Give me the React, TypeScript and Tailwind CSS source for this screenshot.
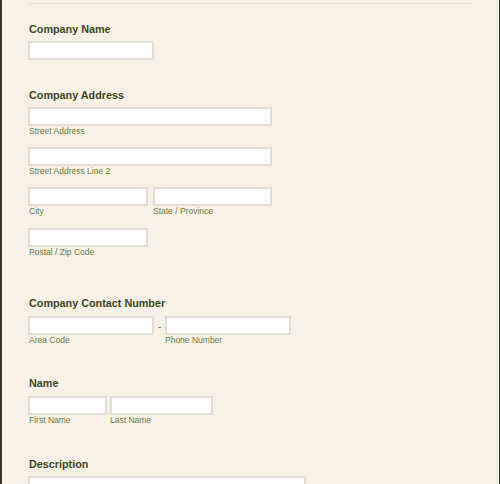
export default function App() {
  const label = "block font-['Liberation_Sans',Arial,sans-serif] text-[10.8px] leading-[15px] font-bold text-[#3b4722]";
  const sub = "block font-['Liberation_Sans',Arial,sans-serif] text-[8.5px] leading-[11px] text-[#6c7a42]";
  const input = 'block h-[19px] bg-white border-2 border-[#e1ded6]';

  return (
    <div className="h-[484px] w-[500px] overflow-hidden bg-[#f8f1e6] border-l-2 border-r border-[#34382a] pl-[26px] font-['Liberation_Sans',Arial,sans-serif]">
      <div className="mt-[3px] h-px w-[444px] bg-[#e6e1d6]" />

      {/* Company Name */}
      <span className={`${label} mt-[18px] pl-px`}>Company Name</span>
      <div className={`${input} w-[126px] mt-[4px]`} />

      {/* Company Address */}
      <span className={`${label} mt-[28px] pl-px`}>Company Address</span>
      <div className={`${input} w-[244px] mt-[4px]`} />
      <span className={`${sub} pl-px`}>Street Address</span>
      <div className={`${input} w-[244px] mt-[10px]`} />
      <span className={`${sub} pl-px`}>Street Address Line 2</span>
      <div className="flex gap-[5px] mt-[10px]">
        <div>
          <div className={`${input} w-[120px]`} />
          <span className={`${sub} pl-px`}>City</span>
        </div>
        <div>
          <div className={`${input} w-[119px]`} />
          <span className={sub}>State / Province</span>
        </div>
      </div>
      <div className={`${input} w-[120px] mt-[11px]`} />
      <span className={`${sub} pl-px`}>Postal / Zip Code</span>

      {/* Company Contact Number */}
      <span className={`${label} mt-[38px] pl-px`}>Company Contact Number</span>
      <div className="flex mt-[5px]">
        <div>
          <div className={`${input} w-[126px]`} />
          <span className={`${sub} pl-px`}>Area Code</span>
        </div>
        <span className="w-[11px] text-center text-[11px] leading-[19px] pt-px text-[#6c7a42]">-</span>
        <div>
          <div className={`${input} w-[126px]`} />
          <span className={sub}>Phone Number</span>
        </div>
      </div>

      {/* Name */}
      <span className={`${label} mt-[30px] pl-px`}>Name</span>
      <div className="flex gap-[3px] mt-[5px]">
        <div>
          <div className={`${input} w-[79px]`} />
          <span className={`${sub} pl-px`}>First Name</span>
        </div>
        <div>
          <div className={`${input} w-[103px]`} />
          <span className={sub}>Last Name</span>
        </div>
      </div>

      {/* Description */}
      <span className={`${label} mt-[31px] pl-px`}>Description</span>
      <div className="h-[80px] w-[278px] mt-[4px] bg-white border-2 border-[#e1ded6]" />
    </div>
  );
}
